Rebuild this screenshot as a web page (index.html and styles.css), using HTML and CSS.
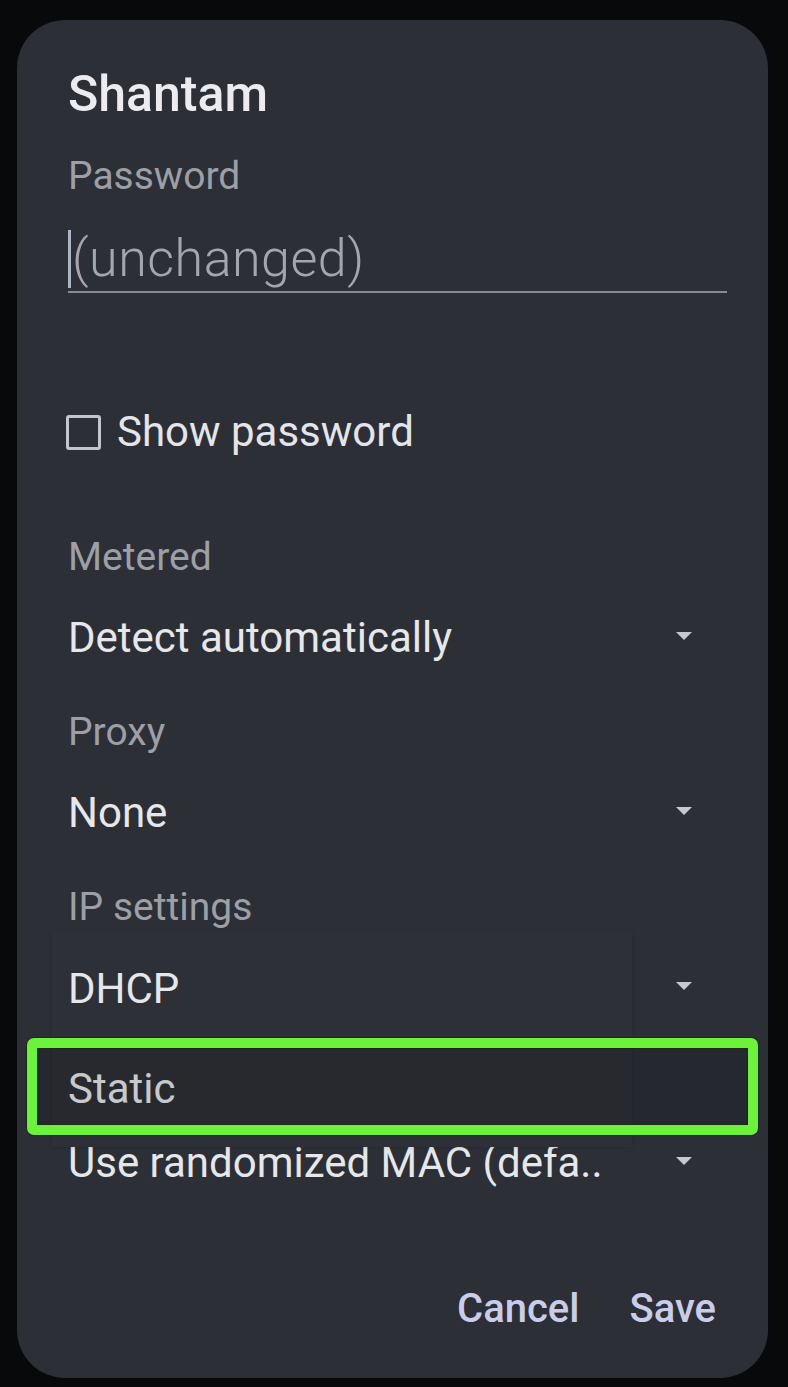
FILE: index.html
```html
<!DOCTYPE html>
<html lang="en">
<head>
<meta charset="utf-8">
<title>Shantam</title>
<link rel="stylesheet" href="styles.css">
</head>
<body>
<div class="dialog">
  <h1 class="title">Shantam</h1>
  <div class="label label-pw">Password</div>
  <div class="input"><span class="caret"></span>(unchanged)</div>
  <label class="check-row">
    <span class="checkbox"></span>
    <span class="check-text">Show password</span>
  </label>

  <div class="group group-first">
    <div class="label">Metered</div>
    <div class="select"><span>Detect automatically</span><svg class="arrow" viewBox="0 0 16 8" width="16" height="8"><polygon points="0,0 16,0 8,8" /></svg></div>
  </div>
  <div class="group">
    <div class="label">Proxy</div>
    <div class="select"><span>None</span><svg class="arrow" viewBox="0 0 16 8" width="16" height="8"><polygon points="0,0 16,0 8,8" /></svg></div>
  </div>
  <div class="group">
    <div class="label">IP settings</div>
    <div class="select"><span>DHCP</span><svg class="arrow" viewBox="0 0 16 8" width="16" height="8"><polygon points="0,0 16,0 8,8" /></svg></div>
  </div>
  <div class="group">
    <div class="label label-covered" aria-hidden="true">Privacy</div>
    <div class="select"><span>Use randomized MAC (defa..</span><svg class="arrow" viewBox="0 0 16 8" width="16" height="8"><polygon points="0,0 16,0 8,8" /></svg></div>
  </div>

  <div class="actions">
    <button class="btn">Cancel</button>
    <button class="btn">Save</button>
  </div>

  <div class="menu">
    <div class="menu-item">DHCP</div>
    <div class="menu-item">Static</div>
  </div>
  <div class="highlight"></div>
</div>
</body>
</html>
```

FILE: styles.css
```css
html, body {
  margin: 0;
  padding: 0;
  background: #08090b;
}

body {
  width: 788px;
  height: 1387px;
  overflow: hidden;
  font-family: Roboto, "Liberation Sans", sans-serif;
}

.dialog {
  position: relative;
  box-sizing: border-box;
  margin: 20px 0 0 17px;
  width: 751px;
  height: 1358px;
  padding: 46px 41px 0 51px;
  background: #2c2f36;
  border-radius: 48px;
}

.title {
  margin: 0;
  font-size: 50px;
  line-height: 56px;
  font-weight: 500;
  color: #ececf0;
}

.label {
  font-size: 39px;
  line-height: 48px;
  color: #9c9fa6;
}

.label-pw {
  margin-top: 30px;
}

.label-covered {
  visibility: hidden;
}

.input {
  margin-top: 27px;
  height: 64px;
  font-size: 52px;
  line-height: 64px;
  font-weight: 300;
  letter-spacing: 0.5px;
  color: #a3a6ae;
  border-bottom: 2px solid #898b92;
  display: flex;
  align-items: center;
  white-space: nowrap;
}

.caret {
  display: inline-block;
  width: 3px;
  height: 58px;
  margin-right: 1px;
  background: #aeb7c9;
}

.check-row {
  display: flex;
  align-items: center;
  margin-top: 114px;
  height: 50px;
}

.checkbox {
  box-sizing: border-box;
  width: 35px;
  height: 35px;
  margin-left: -2px;
  border: 3px solid #c3c5cb;
  border-radius: 3px;
}

.check-text {
  margin-left: 16px;
  font-size: 42px;
  line-height: 50px;
  color: #e4e5e9;
}

.group {
  margin-top: 45px;
}

.group-first {
  margin-top: 76px;
}

.select {
  margin-top: 32px;
  height: 50px;
  display: flex;
  align-items: center;
  justify-content: space-between;
  padding-right: 35px;
  font-size: 42px;
  line-height: 50px;
  color: #e6e7ea;
  white-space: nowrap;
}

.arrow {
  fill: #c8c9ce;
  margin-bottom: 5px;
}

.actions {
  display: flex;
  justify-content: flex-end;
  gap: 26px;
  margin-top: 97px;
  margin-right: -1px;
}

.btn {
  background: none;
  border: none;
  padding: 0 12px;
  font-family: Roboto, "Liberation Sans", sans-serif;
  font-size: 40px;
  line-height: 48px;
  font-weight: 500;
  color: #cacdea;
}

.menu {
  position: absolute;
  left: 35px;
  top: 911px;
  width: 580px;
  padding: 8px 0;
  background: #2d3037;
  box-shadow: 0 1px 4px rgba(0, 0, 0, 0.12);
}

.menu-item {
  height: 100px;
  padding-left: 16px;
  font-size: 42px;
  line-height: 100px;
  color: #e6e7ea;
}

.highlight {
  position: absolute;
  left: 10px;
  top: 1018px;
  box-sizing: border-box;
  width: 731px;
  height: 97px;
  border: 10px solid #6cf23a;
  border-radius: 7px;
  background: rgba(0, 0, 0, 0.13);
  box-shadow: 0 0 0 1px rgba(20, 40, 10, 0.6), inset 0 0 0 1px rgba(20, 40, 10, 0.6);
}
```
